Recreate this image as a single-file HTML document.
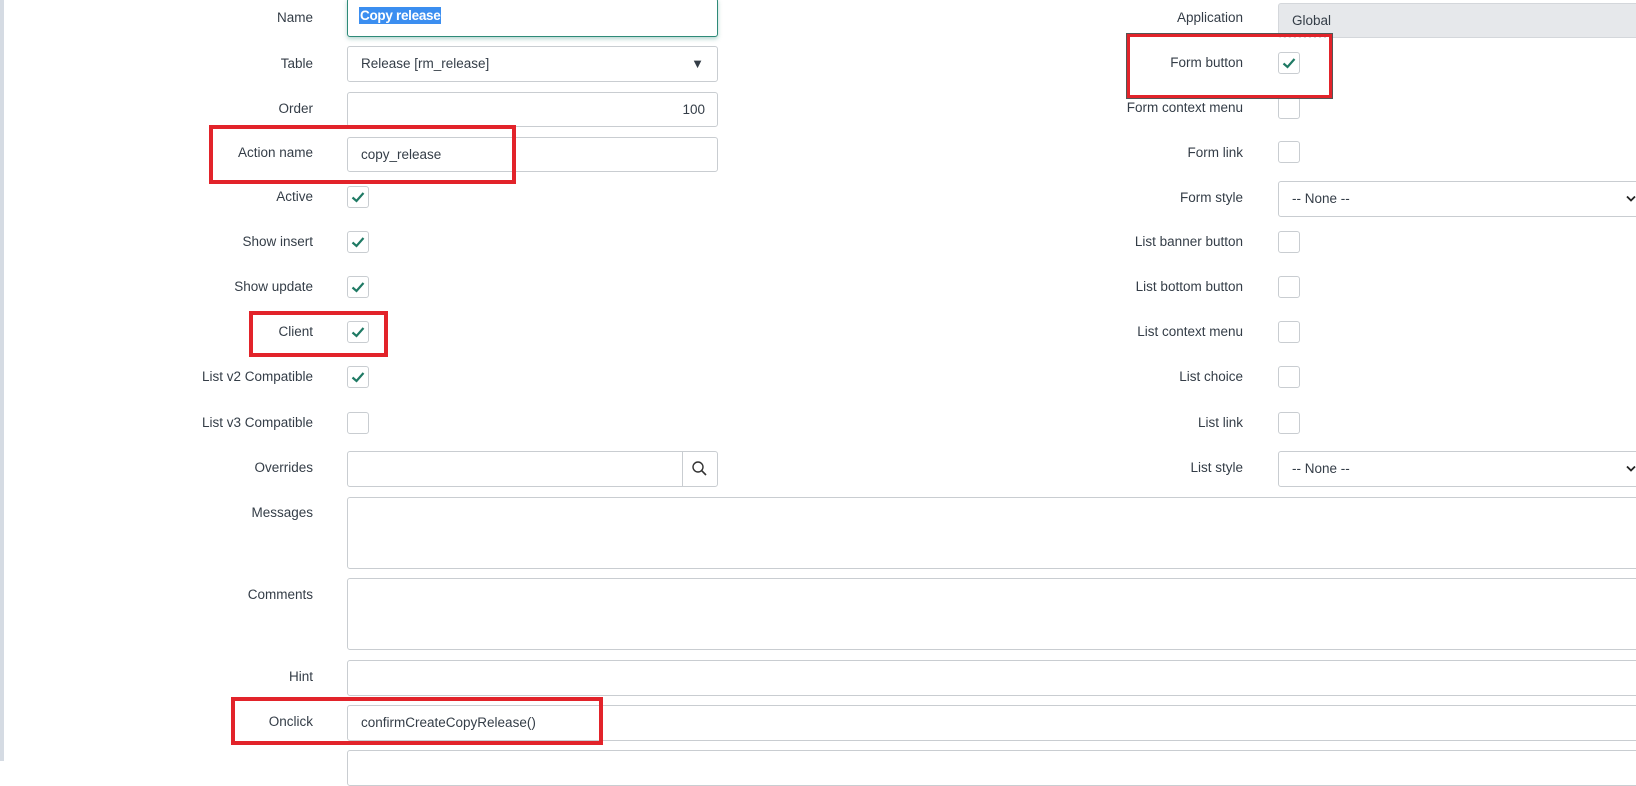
<!DOCTYPE html>
<html><head><meta charset="utf-8"><style>
*{box-sizing:border-box;margin:0;padding:0}
body{width:1636px;height:761px;overflow:hidden;background:#fff;position:relative;font-family:"Liberation Sans",Arial,sans-serif;font-size:13.5px;color:#343d47}
.a{position:absolute}
.strip{left:0;top:0;width:4px;height:761px;background:#d5dbe3}
.lab{position:absolute;text-align:right;white-space:nowrap;line-height:18px}
.l{right:1323px}
.r{right:393px}
.f{position:absolute;border:1px solid #c9cdd1;border-radius:3px;background:#fff;padding-left:13px;line-height:34px;white-space:nowrap}
.cb{position:absolute;width:22px;height:22px;border:1px solid #c9cdd1;border-radius:3px;background:#fff}
.cb svg{position:absolute;left:3px;top:4px}
.red{position:absolute;border:4px solid #e2232a}
</style></head><body>
<div class="a strip"></div>

<!-- left labels -->
<div class="lab l" style="top:9px">Name</div>
<div class="lab l" style="top:55px">Table</div>
<div class="lab l" style="top:100px">Order</div>
<div class="lab l" style="top:144px">Action name</div>
<div class="lab l" style="top:188px">Active</div>
<div class="lab l" style="top:233px">Show insert</div>
<div class="lab l" style="top:278px">Show update</div>
<div class="lab l" style="top:323px">Client</div>
<div class="lab l" style="top:368px">List v2 Compatible</div>
<div class="lab l" style="top:414px">List v3 Compatible</div>
<div class="lab l" style="top:459px">Overrides</div>
<div class="lab l" style="top:504px">Messages</div>
<div class="lab l" style="top:586px">Comments</div>
<div class="lab l" style="top:668px">Hint</div>
<div class="lab l" style="top:713px">Onclick</div>

<!-- left fields -->
<div class="f" style="left:347px;top:-2px;width:371px;height:39px;border-color:#2e8a78;box-shadow:0 2px 4px rgba(46,138,120,.35);padding-left:11px"><span style="background:#3b8ef0;color:#fff;padding:1px 1px;font-weight:bold;letter-spacing:-.3px">Copy release</span></div>
<div class="f" style="left:347px;top:46px;width:371px;height:36px">Release [rm_release]<span class="a" style="right:13px;top:0;font-size:13px">▼</span></div>
<div class="f" style="left:347px;top:92px;width:371px;height:35px;text-align:right;padding-right:12px">100</div>
<div class="f" style="left:347px;top:137px;width:371px;height:35px">copy_release</div>

<div class="cb" style="left:347px;top:186px"><svg width="14" height="12" viewBox="0 0 14 12"><path d="M1.5 6.5 L5.5 10 L12.5 2" fill="none" stroke="#1f7a64" stroke-width="2.2"/></svg></div>
<div class="cb" style="left:347px;top:231px"><svg width="14" height="12" viewBox="0 0 14 12"><path d="M1.5 6.5 L5.5 10 L12.5 2" fill="none" stroke="#1f7a64" stroke-width="2.2"/></svg></div>
<div class="cb" style="left:347px;top:276px"><svg width="14" height="12" viewBox="0 0 14 12"><path d="M1.5 6.5 L5.5 10 L12.5 2" fill="none" stroke="#1f7a64" stroke-width="2.2"/></svg></div>
<div class="cb" style="left:347px;top:321px"><svg width="14" height="12" viewBox="0 0 14 12"><path d="M1.5 6.5 L5.5 10 L12.5 2" fill="none" stroke="#1f7a64" stroke-width="2.2"/></svg></div>
<div class="cb" style="left:347px;top:366px"><svg width="14" height="12" viewBox="0 0 14 12"><path d="M1.5 6.5 L5.5 10 L12.5 2" fill="none" stroke="#1f7a64" stroke-width="2.2"/></svg></div>
<div class="cb" style="left:347px;top:412px"></div>

<div class="f" style="left:347px;top:451px;width:371px;height:36px"></div>
<div class="a" style="left:682px;top:452px;width:1px;height:34px;background:#c9cdd1"></div>
<svg class="a" style="left:691px;top:460px" width="18" height="18" viewBox="0 0 18 18"><circle cx="7" cy="7" r="5" fill="none" stroke="#333" stroke-width="1.4"/><path d="M10.6 10.6 L15 15" stroke="#333" stroke-width="1.6"/></svg>

<div class="f" style="left:347px;top:497px;width:1300px;height:72px"></div>
<div class="f" style="left:347px;top:578px;width:1300px;height:72px"></div>
<div class="f" style="left:347px;top:660px;width:1300px;height:36px"></div>
<div class="f" style="left:347px;top:705px;width:1300px;height:36px">confirmCreateCopyRelease()</div>
<div class="f" style="left:347px;top:750px;width:1300px;height:36px"></div>

<!-- right labels -->
<div class="lab r" style="top:9px">Application</div>
<div class="lab r" style="top:54px">Form button</div>
<div class="lab r" style="top:99px">Form context menu</div>
<div class="lab r" style="top:144px">Form link</div>
<div class="lab r" style="top:189px">Form style</div>
<div class="lab r" style="top:233px">List banner button</div>
<div class="lab r" style="top:278px">List bottom button</div>
<div class="lab r" style="top:323px">List context menu</div>
<div class="lab r" style="top:368px">List choice</div>
<div class="lab r" style="top:414px">List link</div>
<div class="lab r" style="top:459px">List style</div>

<div class="f" style="left:1278px;top:3px;width:380px;height:35px;background:#e6e8eb;border-color:#d4d7db;line-height:33px">Global</div>
<div class="cb" style="left:1278px;top:52px"><svg width="14" height="12" viewBox="0 0 14 12"><path d="M1.5 6.5 L5.5 10 L12.5 2" fill="none" stroke="#1f7a64" stroke-width="2.2"/></svg></div>
<div class="cb" style="left:1278px;top:97px"></div>
<div class="cb" style="left:1278px;top:141px"></div>
<div class="f" style="left:1278px;top:181px;width:380px;height:36px">-- None --<svg class="a" style="left:347px;top:13px" width="10" height="8" viewBox="0 0 10 8"><path d="M1 1.5 L5 5.5 L9 1.5" fill="none" stroke="#222" stroke-width="1.8"/></svg></div>
<div class="cb" style="left:1278px;top:231px"></div>
<div class="cb" style="left:1278px;top:276px"></div>
<div class="cb" style="left:1278px;top:321px"></div>
<div class="cb" style="left:1278px;top:366px"></div>
<div class="cb" style="left:1278px;top:412px"></div>
<div class="f" style="left:1278px;top:451px;width:380px;height:36px">-- None --<svg class="a" style="left:347px;top:13px" width="10" height="8" viewBox="0 0 10 8"><path d="M1 1.5 L5 5.5 L9 1.5" fill="none" stroke="#222" stroke-width="1.8"/></svg></div>

<!-- red annotation boxes -->
<div class="red" style="left:209px;top:125px;width:307px;height:59px"></div>
<div class="red" style="left:249px;top:311px;width:139px;height:46px"></div>
<div class="red" style="left:231px;top:697px;width:372px;height:48px"></div>
<div class="a" style="left:1127px;top:34px;width:205px;height:64px;border:3px solid #e2232a;outline:1px solid #555"></div>
<div class="a" style="left:1130px;top:37px;width:199px;height:58px;border:1px dashed #fff"></div>
</body></html>
